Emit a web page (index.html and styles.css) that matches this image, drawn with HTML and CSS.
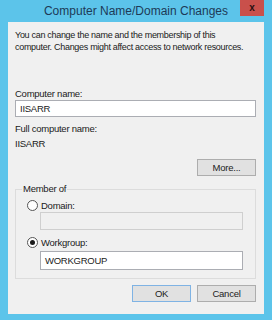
FILE: index.html
```html
<!DOCTYPE html>
<html>
<head>
    <title>Computer Name/Domain Changes</title>
    <link rel="stylesheet" href="styles.css">
</head>
<body>
    <div class="window">
        <div class="titlebar">
            <div class="title">Computer Name/Domain Changes</div>
            <div class="close-btn">x</div>
        </div>
        <div class="panel">
            <p class="intro">You can change the name and the membership of this<br>computer. Changes might affect access to network resources.</p>

            <div class="label">Computer name:</div>
            <div class="textbox">IISARR</div>

            <div class="label full-label">Full computer name:</div>
            <div class="value">IISARR</div>

            <div class="btn-row">
                <button class="btn">More...</button>
            </div>

            <fieldset class="groupbox">
                <legend>Member of</legend>
                <label class="radio-line">
                    <span class="radio"></span>
                    <span>Domain:</span>
                </label>
                <div class="textbox sub disabled"></div>
                <label class="radio-line workgroup">
                    <span class="radio checked"></span>
                    <span>Workgroup:</span>
                </label>
                <div class="textbox sub">WORKGROUP</div>
            </fieldset>

            <div class="btn-row footer">
                <button class="btn default">OK</button>
                <button class="btn">Cancel</button>
            </div>
        </div>
    </div>
</body>
</html>
```

FILE: styles.css
```css
body {
    margin: 0;
    background: #5cc4ea;
    font-family: "Liberation Sans", Arial, sans-serif;
    font-size: 9.5px;
    letter-spacing: -0.25px;
    color: #1a1a1a;
}
.window {
    width: 272px;
    height: 320px;
    display: flex;
    flex-direction: column;
}
.titlebar {
    height: 22px;
    display: flex;
    align-items: flex-start;
}
.title {
    flex: 1;
    margin-left: 32px;
    text-align: center;
    font-size: 12px;
    letter-spacing: 0;
    line-height: 23px;
    white-space: nowrap;
    color: #1d3a57;
}
.close-btn {
    width: 24px;
    height: 16px;
    margin-right: 8px;
    background: #c9504b;
    color: #2a1010;
    font-size: 10px;
    font-weight: bold;
    line-height: 15px;
    text-align: center;
}
.panel {
    margin: 0 8px;
    height: 292px;
    background: #f0f0f0;
    padding: 0 7px;
    display: flex;
    flex-direction: column;
}
.intro {
    margin: 7px 0 0;
    line-height: 12px;
    font-size: 9px;
    letter-spacing: -0.3px;
    white-space: nowrap;
}
.label {
    margin-top: 34px;
    line-height: 13px;
}
.full-label {
    margin-top: 5px;
}
.value {
    margin-top: 2px;
    line-height: 13px;
}
.textbox {
    height: 15px;
    border: 1px solid #abadb3;
    background: #fff;
    padding: 0 4px;
    line-height: 15px;
    color: #222;
    margin-right: 1px;
}
.textbox.disabled {
    background: #f0f0f0;
    border-color: #cfcfcf;
}
.btn-row {
    display: flex;
    justify-content: flex-end;
    gap: 6px;
    margin-top: 9px;
    margin-right: 1px;
}
.btn {
    width: 59px;
    height: 17px;
    border: 1px solid #adadad;
    background: #e1e1e1;
    font-family: inherit;
    font-size: 9.5px;
    letter-spacing: -0.25px;
    color: #222;
    padding: 0;
}
.btn.default {
    border-color: #7fb3e4;
}
.groupbox {
    margin: 7px 1px 0 0;
    border: 1px solid #dcdcdc;
    padding: 0 11px 8px 11px;
    height: 96px;
    box-sizing: border-box;
}
.groupbox legend {
    padding: 0 1px;
    margin-left: -5px;
    line-height: 12px;
}
.radio-line {
    display: flex;
    align-items: center;
    gap: 3px;
    height: 13px;
    margin-top: 4px;
}
.radio {
    width: 9px;
    height: 9px;
    border: 1px solid #555;
    border-radius: 50%;
    background: #fff;
    display: flex;
    align-items: center;
    justify-content: center;
}
.radio.checked::after {
    content: "";
    width: 5px;
    height: 5px;
    border-radius: 50%;
    background: #1a1a1a;
}
.textbox.sub {
    margin-left: 13px;
    margin-top: 0;
    height: 17px;
    line-height: 17px;
}
.textbox.sub.disabled {
    height: 16px;
}
.workgroup {
    margin-top: 6px;
}
.workgroup + .textbox.sub {
    margin-top: 2px;
}
.footer {
    margin-top: 6px;
}
```
